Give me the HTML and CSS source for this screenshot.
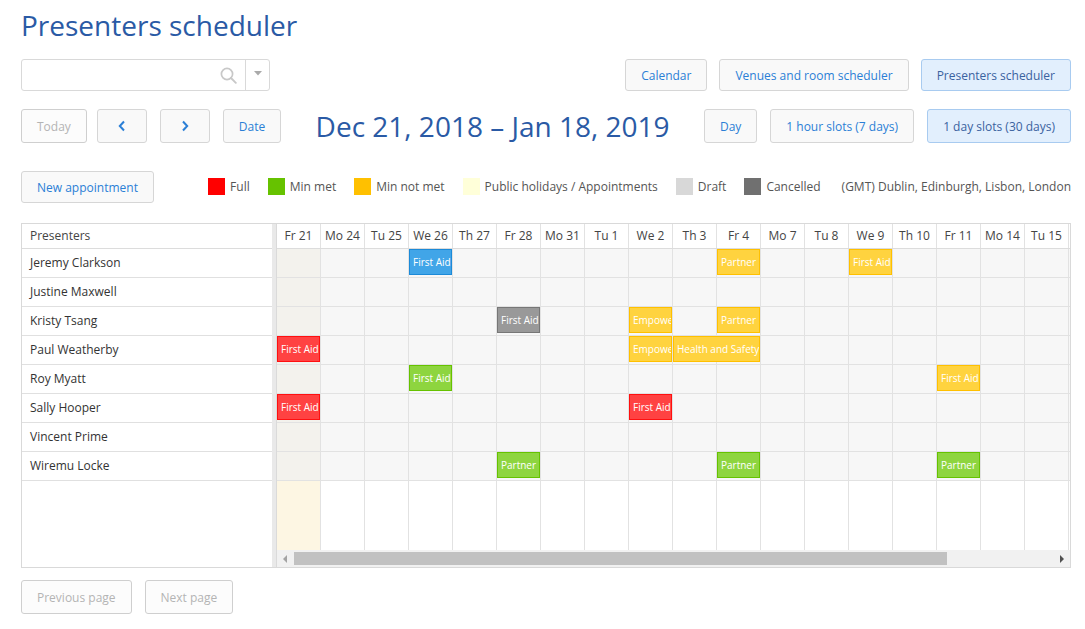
FILE: index.html
```html
<!DOCTYPE html>
<html lang="en">
<head>
    <meta charset="UTF-8">
    <title>Presenters scheduler</title>
    <link rel="stylesheet" href="styles.css">
</head>
<body>
    <div class="page">
        <h1 class="title">Presenters scheduler</h1>

        <div class="toolbar">
            <div class="search">
                <input class="search-input" type="text">
                <span class="search-icon">
                    <svg width="17" height="17" viewBox="0 0 17 17"><circle cx="7" cy="7" r="5.6" fill="none" stroke="#c8c8c8" stroke-width="1.7"/><line x1="11" y1="11" x2="15.8" y2="15.8" stroke="#c8c8c8" stroke-width="1.9" stroke-linecap="round"/></svg>
                </span>
                <span class="search-drop">
                    <svg width="8" height="5" viewBox="0 0 8 5"><path d="M0 0H8L4 4.5Z" fill="#aaa"/></svg>
                </span>
            </div>
            <div class="btn-group">
                <button class="btn">Calendar</button>
                <button class="btn">Venues and room scheduler</button>
                <button class="btn active">Presenters scheduler</button>
            </div>
        </div>

        <div class="toolbar nav-row">
            <div class="btn-group">
                <button class="btn tall disabled today">Today</button>
                <button class="btn tall arrow">
                    <svg width="8" height="12" viewBox="0 0 8 12"><path d="M6 1.5L1.8 6L6 10.5" fill="none" stroke="#2b7fd6" stroke-width="2"/></svg>
                </button>
                <button class="btn tall arrow">
                    <svg width="8" height="12" viewBox="0 0 8 12"><path d="M2 1.5L6.2 6L2 10.5" fill="none" stroke="#2b7fd6" stroke-width="2"/></svg>
                </button>
                <button class="btn tall">Date</button>
            </div>
            <div class="range">Dec 21, 2018 – Jan 18, 2019</div>
            <div class="btn-group">
                <button class="btn tall">Day</button>
                <button class="btn tall">1 hour slots (7 days)</button>
                <button class="btn tall active">1 day slots (30 days)</button>
            </div>
        </div>

        <div class="toolbar legend-row">
            <button class="btn">New appointment</button>
            <ul class="legend">
                <li><span class="swatch full"></span>Full</li>
                <li><span class="swatch met"></span>Min met</li>
                <li><span class="swatch notmet"></span>Min not met</li>
                <li><span class="swatch holiday"></span>Public holidays / Appointments</li>
                <li><span class="swatch draft"></span>Draft</li>
                <li><span class="swatch cancelled"></span>Cancelled</li>
                <li class="tz">(GMT) Dublin, Edinburgh, Lisbon, London</li>
            </ul>
        </div>

        <div class="scheduler">
            <div class="people">
                <div class="people-head">Presenters</div>
                <div class="person">Jeremy Clarkson</div>
                <div class="person">Justine Maxwell</div>
                <div class="person">Kristy Tsang</div>
                <div class="person">Paul Weatherby</div>
                <div class="person">Roy Myatt</div>
                <div class="person">Sally Hooper</div>
                <div class="person">Vincent Prime</div>
                <div class="person">Wiremu Locke</div>
                <div class="people-fill"></div>
            </div>
            <div class="splitter"></div>
            <div class="cal">
                <div class="cal-view">
                    <div class="cal-inner">
                        <div class="cal-head">
                            <span>Fr 21</span><span>Mo 24</span><span>Tu 25</span><span>We 26</span><span>Th 27</span>
                            <span>Fr 28</span><span>Mo 31</span><span>Tu 1</span><span>We 2</span><span>Th 3</span>
                            <span>Fr 4</span><span>Mo 7</span><span>Tu 8</span><span>We 9</span><span>Th 10</span>
                            <span>Fr 11</span><span>Mo 14</span><span>Tu 15</span>
                            <!-- scrolled out of view -->
                            <span></span><span></span><span></span>
                        </div>
                        <!-- Jeremy Clarkson -->
                        <div class="cal-row">
                            <div class="ev blue" style="grid-column: 4">First Aid</div>
                            <div class="ev yellow" style="grid-column: 11">Partner</div>
                            <div class="ev yellow" style="grid-column: 14">First Aid</div>
                        </div>
                        <!-- Justine Maxwell -->
                        <div class="cal-row"></div>
                        <!-- Kristy Tsang -->
                        <div class="cal-row">
                            <div class="ev grey" style="grid-column: 6">First Aid</div>
                            <div class="ev yellow" style="grid-column: 9">Empowe</div>
                            <div class="ev yellow" style="grid-column: 11">Partner</div>
                        </div>
                        <!-- Paul Weatherby -->
                        <div class="cal-row">
                            <div class="ev red" style="grid-column: 1">First Aid</div>
                            <div class="ev yellow" style="grid-column: 9">Empowe</div>
                            <div class="ev yellow" style="grid-column: 10 / span 2">Health and Safety</div>
                        </div>
                        <!-- Roy Myatt -->
                        <div class="cal-row">
                            <div class="ev green" style="grid-column: 4">First Aid</div>
                            <div class="ev yellow" style="grid-column: 16">First Aid</div>
                        </div>
                        <!-- Sally Hooper -->
                        <div class="cal-row">
                            <div class="ev red" style="grid-column: 1">First Aid</div>
                            <div class="ev red" style="grid-column: 9">First Aid</div>
                        </div>
                        <!-- Vincent Prime -->
                        <div class="cal-row"></div>
                        <!-- Wiremu Locke -->
                        <div class="cal-row">
                            <div class="ev green" style="grid-column: 6">Partner</div>
                            <div class="ev green" style="grid-column: 11">Partner</div>
                            <div class="ev green" style="grid-column: 16">Partner</div>
                        </div>
                        <div class="cal-fill"></div>
                    </div>
                </div>
                <div class="hscroll">
                    <span class="hs-arrow left"></span>
                    <div class="hs-track"><div class="hs-thumb"></div></div>
                    <span class="hs-arrow right"></span>
                </div>
            </div>
        </div>

        <div class="pager">
            <button class="btn tall disabled">Previous page</button>
            <button class="btn tall disabled">Next page</button>
        </div>
    </div>
</body>
</html>
```

FILE: styles.css
```css
* {
    margin: 0;
    padding: 0;
    box-sizing: border-box;
}

body {
    font-family: 'Open Sans', 'Liberation Sans', sans-serif;
    font-size: 12px;
    color: #333;
    background: #fff;
}

.page {
    padding: 9px 14px 0 21px;
}

.title {
    font-size: 28px;
    font-weight: normal;
    line-height: 33px;
    color: #2a5aa5;
    margin-bottom: 17px;
}

.toolbar {
    display: flex;
    align-items: center;
    justify-content: space-between;
}

.btn-group {
    display: flex;
    gap: 12px;
}

.btn {
    height: 32px;
    padding: 0 15px;
    border: 1px solid #d6d6d6;
    border-radius: 3px;
    background: #f9f9f9;
    color: #2b7fd6;
    font-family: inherit;
    font-size: 12px;
    white-space: nowrap;
    cursor: pointer;
}

.btn.tall {
    height: 34px;
}

.btn.active {
    background: #e2effd;
    border-color: #a8cbf0;
    color: #3a62a0;
}

.btn.disabled {
    color: #b4b4b4;
    background: #fcfcfc;
    border-color: #cfcfcf;
}

.btn.arrow {
    width: 50px;
    display: flex;
    align-items: center;
    justify-content: center;
}

/* search */
.search {
    width: 249px;
    height: 32px;
    border: 1px solid #d9d9d9;
    border-radius: 3px;
    display: flex;
}

.search-input {
    flex: 1;
    border: none;
    outline: none;
    background: transparent;
    min-width: 0;
}

.search-icon {
    width: 30px;
    display: flex;
    align-items: center;
    justify-content: center;
    padding-right: 4px;
}

.search-drop {
    width: 24px;
    border-left: 1px solid #d9d9d9;
    display: flex;
    align-items: center;
    justify-content: center;
    padding-bottom: 3px;
}

/* nav row */
.nav-row {
    margin-top: 18px;
}

.nav-row .btn-group {
    gap: 13px;
}

.today {
    margin-right: -3px;
}

.range {
    flex: 1;
    text-align: center;
    font-size: 28px;
    color: #2a5aa5;
    line-height: 34px;
    white-space: nowrap;
}

/* legend */
.legend-row {
    margin-top: 28px;
}

.legend {
    list-style: none;
    display: flex;
    gap: 18px;
    color: #555;
    margin-top: -2px;
    white-space: nowrap;
}

.legend li {
    display: flex;
    align-items: center;
    gap: 5px;
}

.legend .tz {
    margin-left: 3px;
}

.swatch {
    width: 17px;
    height: 17px;
    display: inline-block;
}

.swatch.full { background: #ff0000; }
.swatch.met { background: #66c200; }
.swatch.notmet { background: #ffc000; }
.swatch.holiday { background: #ffffd9; }
.swatch.draft { background: #d8d8d8; }
.swatch.cancelled { background: #707070; }

/* scheduler grid */
.scheduler {
    margin-top: 20px;
    height: 345px;
    border: 1px solid #d9d9d9;
    display: flex;
}

.people {
    width: 250px;
    display: flex;
    flex-direction: column;
}

.people-head {
    height: 25px;
    line-height: 24px;
    border-bottom: 1px solid #dcdcdc;
    padding-left: 8px;
    color: #444;
}

.person {
    height: 29px;
    line-height: 28px;
    border-bottom: 1px solid #e0e0e0;
    padding-left: 8px;
}

.people-fill {
    flex: 1;
}

.splitter {
    width: 5px;
    background: #e9e9e9;
    border-right: 1px solid #dadada;
}

.cal {
    flex: 1;
    min-width: 0;
    display: flex;
    flex-direction: column;
}

.cal-view {
    flex: 1;
    overflow: hidden;
}

.cal-inner {
    width: 924px;
    height: 100%;
    display: flex;
    flex-direction: column;
}

.cal-head {
    display: grid;
    grid-template-columns: repeat(21, 44px);
    height: 25px;
    border-bottom: 1px solid #dcdcdc;
}

.cal-head span {
    border-right: 1px solid #e2e2e2;
    text-align: center;
    line-height: 24px;
    color: #444;
    white-space: nowrap;
}

.cal-row {
    display: grid;
    grid-template-columns: repeat(21, 44px);
    grid-template-rows: 28px;
    height: 29px;
    border-bottom: 1px solid #e2e2e2;
    background:
        repeating-linear-gradient(to right, transparent 0 43px, #e2e2e2 43px 44px),
        linear-gradient(to right, #f3f2ed 0 43px, #f7f7f7 43px);
}

.cal-fill {
    flex: 1;
    background:
        repeating-linear-gradient(to right, transparent 0 43px, #e2e2e2 43px 44px),
        linear-gradient(to right, #fdf6e3 0 43px, #fff 43px);
}

.ev {
    grid-row: 1;
    margin: 0 1px 2px 0;
    border: 1px solid;
    color: #fff;
    font-size: 10px;
    line-height: 24px;
    padding-left: 3px;
    overflow: hidden;
    white-space: nowrap;
}

.ev.red { background: #ff4242; border-color: #ff1010; }
.ev.green { background: #8ed53f; border-color: #66c200; }
.ev.yellow { background: #ffd33f; border-color: #ffc000; }
.ev.grey { background: #999; border-color: #777; }
.ev.blue { background: #41a5e8; border-color: #1c8ad8; }

/* horizontal scrollbar */
.hscroll {
    height: 17px;
    background: #f1f1f1;
    display: flex;
    align-items: center;
}

.hs-arrow {
    width: 16px;
    height: 17px;
    display: flex;
    align-items: center;
    justify-content: center;
}

.hs-arrow::before {
    content: "";
    border-top: 4px solid transparent;
    border-bottom: 4px solid transparent;
}

.hs-arrow.left::before {
    border-right: 4px solid #a3a3a3;
}

.hs-arrow.right::before {
    border-left: 4px solid #505050;
}

.hs-track {
    flex: 1;
    height: 13px;
}

.hs-thumb {
    width: 653px;
    height: 13px;
    margin-left: 1px;
    background: #c1c1c1;
}

.pager {
    margin-top: 12px;
    display: flex;
    gap: 13px;
}
```
